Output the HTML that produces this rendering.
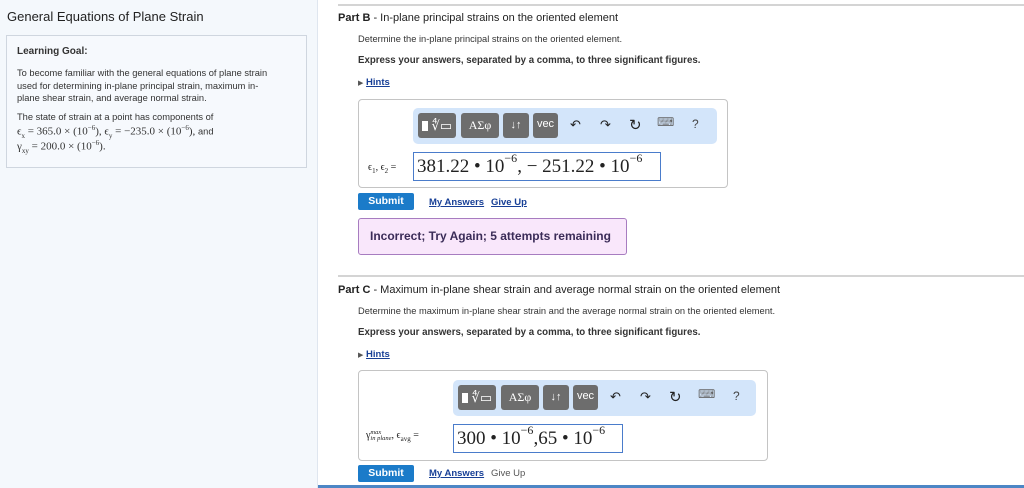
<!DOCTYPE html>
<html><head><meta charset="utf-8"><style>
*{margin:0;padding:0;box-sizing:border-box}
body{width:1024px;height:488px;position:relative;background:#fff;font-family:"Liberation Sans",Arial,sans-serif;color:#222;overflow:hidden}
.a{position:absolute;white-space:nowrap}
.left{position:absolute;left:0;top:0;width:318px;height:488px;background:#f4f8fc;border-right:1px solid #dfe6ef}
.goal{position:absolute;left:6px;top:35px;width:301px;height:133px;border:1px solid #cfd6df;background:#f6f9fd}
.m{font-family:"Liberation Serif",serif}
.hr{position:absolute;height:2px;background:#d4d4d4}
.box{position:absolute;border:1px solid #c4c4c4;border-radius:4px;background:#fff}
.tb{position:absolute;background:#d3e5fa;border-radius:5px}
.btn{position:absolute;background:#6d6d6d;border-radius:3px;color:#fff;text-align:center;font-size:11px;white-space:nowrap}
.ic{position:absolute;font-size:13px;color:#222}
.inp{position:absolute;border:1px solid #4a7ccb;background:#fff;font-family:"Liberation Serif",serif;font-size:19px;color:#222;padding-left:3px;line-height:27px;white-space:nowrap;overflow:hidden}
.inp sup{font-size:12px;position:relative;top:-2px;vertical-align:top;line-height:14px}
.sub{position:absolute;background:#1b7bc9;color:#fff;font-weight:bold;font-size:10.5px;text-align:center;border-radius:2px;line-height:17px}
.lnk{position:absolute;font-size:9.5px;color:#173f96;text-decoration:underline;font-weight:bold}
</style></head><body>
<div class="left"></div>
<div class="a" style="left:7px;top:9px;font-size:13px;color:#222">General Equations of Plane Strain</div>
<div class="goal"></div>
<div class="a" style="left:17px;top:46px;font-size:10px;font-weight:bold;color:#333">Learning Goal:</div>
<div class="a" style="left:17px;top:67px;font-size:9.3px;line-height:12.5px;color:#333">To become familiar with the general equations of plane strain<br>used for determining in-plane principal strain, maximum in-<br>plane shear strain, and average normal strain.</div>
<div class="a" style="left:17px;top:112px;font-size:9.3px;color:#333">The state of strain at a point has components of</div>
<div class="a m" style="left:17px;top:124px;font-size:11px;color:#333">ϵ<sub style="font-size:7px">x</sub> = 365.0 × (10<sup style="font-size:7px">−6</sup>), ϵ<sub style="font-size:7px">y</sub> = −235.0 × (10<sup style="font-size:7px">−6</sup>), <span style="font-family:'Liberation Sans';font-size:9.3px">and</span></div>
<div class="a m" style="left:17px;top:139px;font-size:11px;color:#333">γ<sub style="font-size:7px">xy</sub> = 200.0 × (10<sup style="font-size:7px">−6</sup>).</div>

<div class="hr" style="left:338px;top:4px;width:686px"></div>
<div class="a" style="left:338px;top:12px;font-size:11px"><b>Part B</b> - In-plane principal strains on the oriented element</div>
<div class="a" style="left:358px;top:34px;font-size:9.3px;color:#333">Determine the in-plane principal strains on the oriented element.</div>
<div class="a" style="left:358px;top:55px;font-size:9.7px;font-weight:bold;color:#333">Express your answers, separated by a comma, to three significant figures.</div>
<div class="a" style="left:358px;top:77px;font-size:9.5px;color:#173f96"><span style="font-size:7px;color:#555">▶</span> <b style="text-decoration:underline">Hints</b></div>

<div class="box" style="left:358px;top:99px;width:370px;height:89px"></div>
<div class="tb" style="left:413px;top:108px;width:304px;height:36px"></div>
<div class="btn" style="left:418px;top:113px;width:38px;height:25px;line-height:25px;font-size:13px"><span style="display:inline-block;width:6px;height:10px;background:#fff;vertical-align:-1px"></span> <span class="m">∜</span>▭</div>
<div class="btn m" style="left:461px;top:113px;width:38px;height:25px;line-height:25px;font-size:12px">ΑΣφ</div>
<div class="btn" style="left:503px;top:113px;width:26px;height:25px;line-height:25px">↓↑</div>
<div class="btn" style="left:533px;top:113px;width:25px;height:25px;line-height:22px">vec</div>
<div class="ic" style="left:570px;top:117px">↶</div>
<div class="ic" style="left:600px;top:117px">↷</div>
<div class="ic" style="left:629px;top:116px;font-size:15px">↻</div>
<div class="ic" style="left:657px;top:115px;font-size:12px;color:#666">⌨</div>
<div class="ic" style="left:692px;top:117px;font-size:12px;color:#444">?</div>
<div class="a m" style="left:368px;top:162px;font-size:10px">ϵ<sub style="font-size:7px">1</sub>, ϵ<sub style="font-size:7px">2</sub> =</div>
<div class="inp" style="left:413px;top:152px;width:248px;height:29px">381.22 • 10<sup>−6</sup>, − 251.22 • 10<sup>−6</sup></div>
<div class="sub" style="left:358px;top:193px;width:56px;height:17px">Submit</div>
<div class="lnk" style="left:429px;top:197px">My Answers</div>
<div class="lnk" style="left:491px;top:197px">Give Up</div>
<div class="a" style="left:358px;top:218px;width:269px;height:37px;background:#f9e7fb;border:1px solid #a77cc0;border-radius:3px;font-size:12px;font-weight:bold;color:#3b2c58;line-height:35px;padding-left:11px">Incorrect; Try Again; 5 attempts remaining</div>

<div class="hr" style="left:338px;top:275px;width:686px"></div>
<div class="a" style="left:338px;top:284px;font-size:11px"><b>Part C</b> - Maximum in-plane shear strain and average normal strain on the oriented element</div>
<div class="a" style="left:358px;top:306px;font-size:9.3px;color:#333">Determine the maximum in-plane shear strain and the average normal strain on the oriented element.</div>
<div class="a" style="left:358px;top:327px;font-size:9.7px;font-weight:bold;color:#333">Express your answers, separated by a comma, to three significant figures.</div>
<div class="a" style="left:358px;top:349px;font-size:9.5px;color:#173f96"><span style="font-size:7px;color:#555">▶</span> <b style="text-decoration:underline">Hints</b></div>

<div class="box" style="left:358px;top:370px;width:410px;height:91px"></div>
<div class="tb" style="left:453px;top:380px;width:303px;height:36px"></div>
<div class="btn" style="left:458px;top:385px;width:38px;height:25px;line-height:25px;font-size:13px"><span style="display:inline-block;width:6px;height:10px;background:#fff;vertical-align:-1px"></span> <span class="m">∜</span>▭</div>
<div class="btn m" style="left:501px;top:385px;width:38px;height:25px;line-height:25px;font-size:12px">ΑΣφ</div>
<div class="btn" style="left:543px;top:385px;width:26px;height:25px;line-height:25px">↓↑</div>
<div class="btn" style="left:573px;top:385px;width:25px;height:25px;line-height:22px">vec</div>
<div class="ic" style="left:610px;top:389px">↶</div>
<div class="ic" style="left:640px;top:389px">↷</div>
<div class="ic" style="left:669px;top:388px;font-size:15px">↻</div>
<div class="ic" style="left:698px;top:387px;font-size:12px;color:#666">⌨</div>
<div class="ic" style="left:733px;top:389px;font-size:12px;color:#444">?</div>
<div class="a m" style="left:366px;top:430px;font-size:10px">γ<span style="display:inline-block;font-size:6.5px;font-style:italic;line-height:6px;vertical-align:-2px"> max<br>in plane</span>, ϵ<sub style="font-size:7px">avg</sub> =</div>
<div class="inp" style="left:453px;top:424px;width:170px;height:29px">300 • 10<sup>−6</sup>,65 • 10<sup>−6</sup></div>
<div class="sub" style="left:358px;top:465px;width:56px;height:17px">Submit</div>
<div class="lnk" style="left:429px;top:468px">My Answers</div>
<div class="a" style="left:491px;top:468px;font-size:9.5px;color:#555">Give Up</div>
<div class="a" style="left:318px;top:485px;width:706px;height:3px;background:#4d86c5"></div>
</body></html>
